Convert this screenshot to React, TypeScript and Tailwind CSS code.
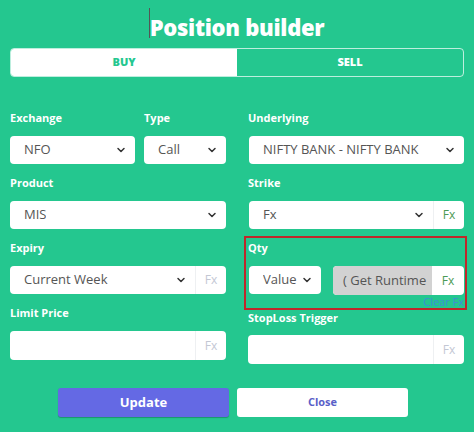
import { ChevronDown } from 'lucide-react'

const font = { fontFamily: '"Open Sans", "Liberation Sans", sans-serif' }

function Label({ children }: { children: string }) {
  return <div className="h-4 text-[11px] font-bold leading-4 text-white">{children}</div>
}

function Select({ value, className = '' }: { value: string; className?: string }) {
  return (
    <div className={`flex h-7 items-center justify-between rounded bg-white pl-[14px] pr-2 ${className}`}>
      <span className="truncate text-[13px] text-[#555]">{value}</span>
      <ChevronDown size={12} strokeWidth={3} className="shrink-0 text-[#333]" />
    </div>
  )
}

function Fx({ active }: { active?: boolean }) {
  return (
    <div
      className={`flex h-full w-[31px] shrink-0 items-center justify-center border-l border-[#eef0f2] text-[12px] ${
        active ? 'text-[#4b9a55]' : 'text-[#c3c7d4]'
      }`}
    >
      Fx
    </div>
  )
}

function FxSelect({ value, active }: { value: string; active?: boolean }) {
  return (
    <div className="flex h-7 items-center overflow-hidden rounded bg-white">
      <div className="flex flex-1 items-center justify-between pl-[14px] pr-2">
        <span className="truncate text-[13px] text-[#555]">{value}</span>
        <ChevronDown size={12} strokeWidth={3} className="shrink-0 text-[#333]" />
      </div>
      <Fx active={active} />
    </div>
  )
}

function FxInput() {
  return (
    <div className="flex h-[29px] items-center overflow-hidden rounded bg-white">
      <div className="flex-1" />
      <Fx />
    </div>
  )
}

export default function App() {
  return (
    <div className="h-[432px] w-[474px] overflow-hidden bg-[#24c78f] px-[10px]" style={font}>
      {/* Title */}
      <div className="flex h-[48px] items-center justify-center pt-[6px]">
        <div className="relative">
          <span className="absolute -left-[1px] top-[-3px] h-[30px] w-px bg-[#555]" />
          <h1 className="text-[22px] font-extrabold tracking-[-0.3px] text-white">Position builder</h1>
        </div>
      </div>

      {/* Buy / Sell */}
      <div className="flex h-[29px] overflow-hidden rounded border border-white/70">
        <div className="flex flex-1 items-center justify-center bg-white text-[11px] font-extrabold text-[#24c78f]">BUY</div>
        <div className="flex flex-1 items-center justify-center text-[11px] font-extrabold text-white">SELL</div>
      </div>

      {/* Form */}
      <div className="mt-[33px] flex gap-[22px]">
        {/* Left column */}
        <div className="flex w-[216px] flex-col gap-[11px]">
          <div className="flex gap-[9px]">
            <div className="w-[125px]">
              <Label>Exchange</Label>
              <Select value="NFO" className="mt-[10px]" />
            </div>
            <div className="flex-1">
              <Label>Type</Label>
              <Select value="Call" className="mt-[10px]" />
            </div>
          </div>
          <div>
            <Label>Product</Label>
            <Select value="MIS" className="mt-[10px]" />
          </div>
          <div>
            <Label>Expiry</Label>
            <div className="mt-[10px]">
              <FxSelect value="Current Week" />
            </div>
          </div>
          <div>
            <Label>Limit Price</Label>
            <div className="mt-[10px]">
              <FxInput />
            </div>
          </div>
        </div>

        {/* Right column */}
        <div className="flex w-[216px] flex-col">
          <div>
            <Label>Underlying</Label>
            <Select value="NIFTY BANK - NIFTY BANK" className="mt-[10px] ml-px" />
          </div>
          <div className="mt-[11px]">
            <Label>Strike</Label>
            <div className="mt-[10px] ml-px">
              <FxSelect value="Fx" active />
            </div>
          </div>
          <div className="-ml-[4px] -mr-[3px] mt-[7px] border-2 border-[#c0262a] pl-[2px] pr-px pt-[2px]">
            <Label>Qty</Label>
            <div className="mt-[10px] flex gap-[12px] pl-px">
              <Select value="Value" className="w-[72px] pl-[12px]" />
              <div className="flex h-[29px] flex-1 items-center overflow-hidden rounded bg-white">
                <div className="flex h-full flex-1 items-center bg-[#d2d2d2] pl-[10px] text-[13px] text-[#555]">
                  ( Get Runtime
                </div>
                <div className="flex h-full w-[32px] items-center justify-center text-[12px] text-[#4b9a55]">Fx</div>
              </div>
            </div>
            <div className="h-[13px] pt-[1px] text-right text-[11px] leading-[12px] text-[#3f8ed6]">Clear Fx</div>
          </div>
          <div>
            <Label>StopLoss Trigger</Label>
            <div className="mt-[9px]">
              <FxInput />
            </div>
          </div>
        </div>
      </div>

      {/* Buttons */}
      <div className="mt-[24px] flex gap-[8px] pl-[48px]">
        <button className="h-[29px] w-[171px] rounded-[3px] bg-[#6469e4] text-[13px] font-bold text-white shadow-[0_1px_1px_rgba(0,0,0,0.25)]">
          Update
        </button>
        <button className="h-[29px] w-[171px] rounded-[3px] bg-white text-[11px] font-bold text-[#5a5fc8]">Close</button>
      </div>
    </div>
  )
}
